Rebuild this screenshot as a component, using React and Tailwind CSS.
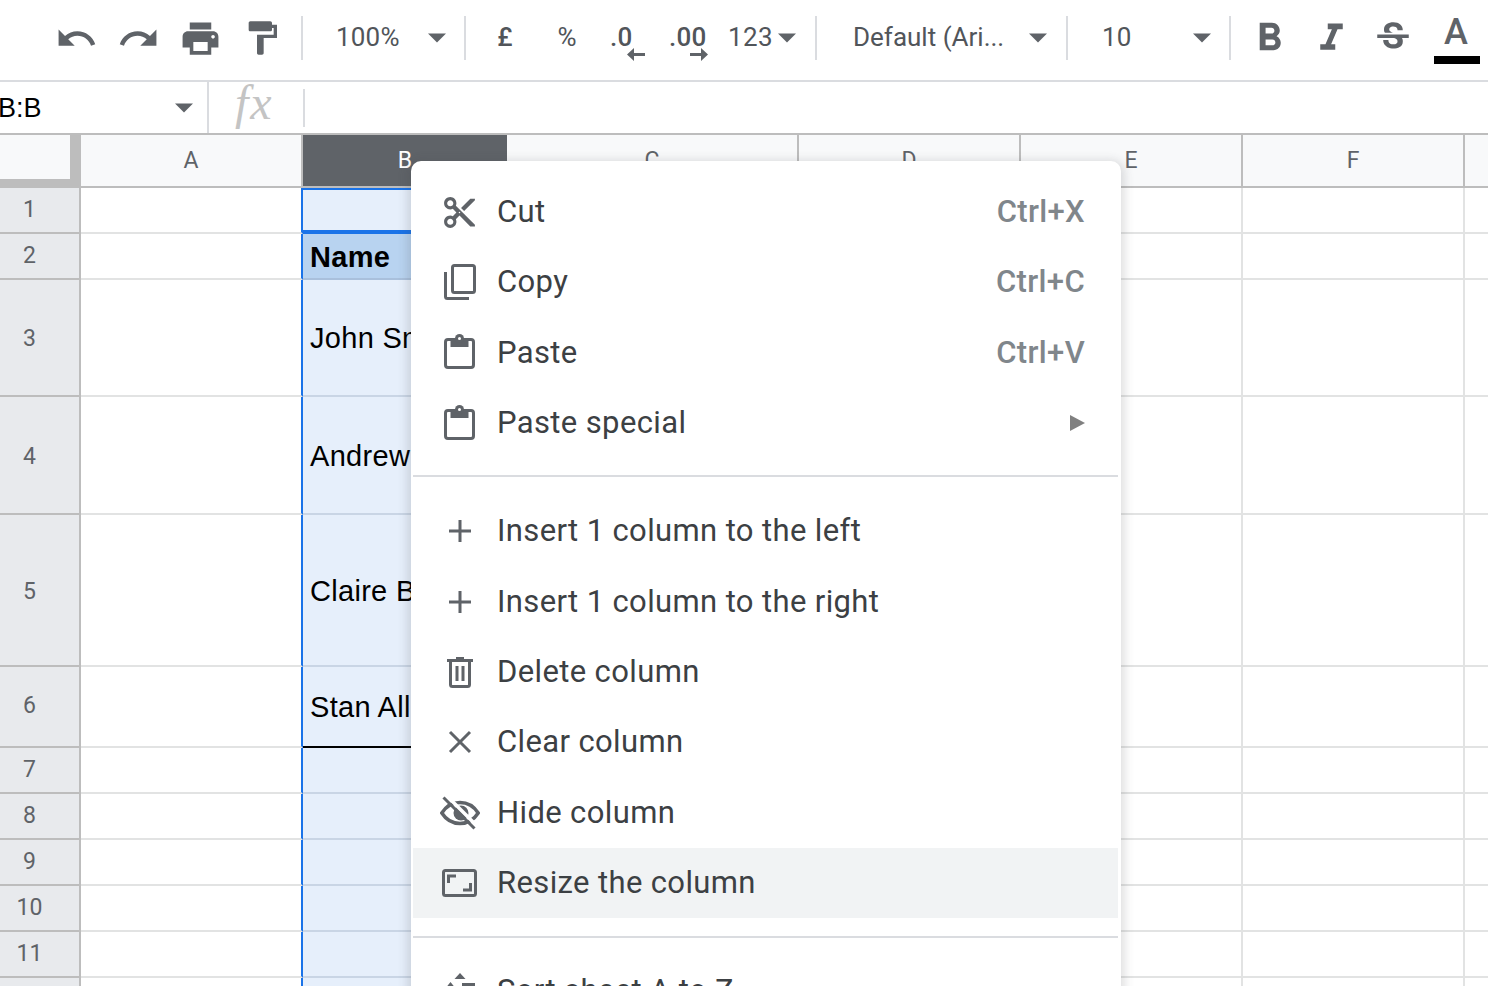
import React from 'react';

const Caret = ({ className = '' }) => (
  <svg width="18" height="10" viewBox="0 0 18 10" className={`shrink-0 ${className}`}>
    <path d="M0 0.5h18L9 9.5z" fill="#5f6368" />
  </svg>
);

const MaterialIcon = ({ d, size = 43 }) => (
  <svg width={size} height={size} viewBox="0 0 24 24" fill="#5f6368">
    <path d={d} />
  </svg>
);

const ToolbarCell = ({ children, className = '' }) => (
  <div className={`flex h-full w-[62px] shrink-0 items-center justify-center ${className}`}>{children}</div>
);

const Divider = () => <div className="h-[44px] w-[2px] shrink-0 bg-[#dadce0]" />;

const Arrow = ({ flip }) => (
  <svg width="18" height="13" viewBox="0 0 18 13" className={`absolute top-[48px] ${flip ? 'left-[30px]' : 'left-[29px]'}`}>
    <path d={flip ? 'M0 5h11V0l7 6.5L11 13V8H0z' : 'M18 5H7V0L0 6.5 7 13V8h11z'} fill="#5f6368" />
  </svg>
);

const Toolbar = () => (
  <div className="flex h-[80px] items-start pl-[45px] pt-[16px] font-['Roboto',sans-serif] text-[26px] tracking-[0.2px] text-[#51555a]">
    <div className="-mt-[16px] flex h-[76px]">
      <ToolbarCell><MaterialIcon d="M12.5 8c-2.65 0-5.05.99-6.9 2.6L2 7v9h9l-3.62-3.62c1.39-1.16 3.16-1.88 5.12-1.88 3.54 0 6.55 2.31 7.6 5.5l2.37-.78C21.08 11.03 17.15 8 12.5 8z" /></ToolbarCell>
      <ToolbarCell><MaterialIcon d="M18.4 10.6C16.55 8.99 14.15 8 11.5 8c-4.65 0-8.58 3.03-9.96 7.22L3.9 16c1.05-3.19 4.05-5.5 7.6-5.5 1.95 0 3.73.72 5.12 1.88L13 16h9V7l-3.6 3.6z" /></ToolbarCell>
      <ToolbarCell><MaterialIcon d="M19 8H5c-1.66 0-3 1.34-3 3v6h4v4h12v-4h4v-6c0-1.66-1.34-3-3-3zm-3 11H8v-5h8v5zm3-7c-.55 0-1-.45-1-1s.45-1 1-1 1 .45 1 1-.45 1-1 1zm-1-9H6v4h12V3z" /></ToolbarCell>
      <ToolbarCell><MaterialIcon size={40} d="M18 4V3c0-.55-.45-1-1-1H5c-.55 0-1 .45-1 1v4c0 .55.45 1 1 1h12c.55 0 1-.45 1-1V6h1v4H9v11c0 .55.45 1 1 1h2c.55 0 1-.45 1-1v-9h8V4h-3z" /></ToolbarCell>
    </div>
    <div className="ml-[8px]"><Divider /></div>

    <div className="flex h-[44px] w-[161px] shrink-0 items-center justify-between pl-[33px] pr-[18px]">
      <span className="-mt-[2px]">100%</span>
      <Caret />
    </div>
    <Divider />

    <div className="-mt-[16px] flex h-[76px] pl-[8px]">
      <ToolbarCell className="font-medium"><span className="-mt-[2px]">£</span></ToolbarCell>
      <ToolbarCell><span className="-mt-[2px]">%</span></ToolbarCell>
      <ToolbarCell className="relative justify-start pl-[12px]">
        <span className="-mt-[2px] font-medium">.0</span>
        <Arrow />
      </ToolbarCell>
      <ToolbarCell className="relative justify-start pl-[9px]">
        <span className="-mt-[2px] font-medium">.00</span>
        <Arrow flip />
      </ToolbarCell>
    </div>
    <div className="flex h-[44px] w-[93px] shrink-0 items-center gap-[5px] pl-[6px] tracking-[0.4px]">
      <span className="-mt-[2px]">123</span>
      <Caret />
    </div>
    <Divider />

    <div className="flex h-[44px] w-[249px] shrink-0 items-center justify-between pl-[36px] pr-[19px]">
      <span className="-mt-[2px] tracking-normal">Default (Ari...</span>
      <Caret />
    </div>
    <Divider />

    <div className="flex h-[44px] w-[161px] shrink-0 items-center justify-between pl-[34px] pr-[18px]">
      <span className="-mt-[2px]">10</span>
      <Caret />
    </div>
    <Divider />

    <div className="-mt-[16px] flex h-[76px] pl-[7px]">
      <ToolbarCell><MaterialIcon size={47} d="M15.6 10.79c.97-.67 1.65-1.77 1.65-2.79 0-2.26-1.75-4-4-4H7v14h7.04c2.09 0 3.71-1.7 3.71-3.79 0-1.52-.86-2.82-2.15-3.42zM10 6.5h3c.83 0 1.5.67 1.5 1.5s-.67 1.5-1.5 1.5h-3v-3zm3.5 9H10v-3h3.5c.83 0 1.5.67 1.5 1.5s-.67 1.5-1.5 1.5z" /></ToolbarCell>
      <ToolbarCell><MaterialIcon size={45} d="M10 4v3h2.21l-3.42 8H6v3h8v-3h-2.21l3.42-8H18V4z" /></ToolbarCell>
      <ToolbarCell><MaterialIcon size={42} d="M6.85 7.08C6.85 4.37 9.45 3 12.24 3c1.64 0 3 .49 3.9 1.28.77.65 1.46 1.73 1.46 3.24h-3.01c0-.31-.05-.59-.15-.85-.29-.86-1.2-1.28-2.25-1.28-1.86 0-2.34 1.02-2.34 1.7 0 .48.25.88.74 1.21.38.25.77.48 1.41.7H7.39c-.21-.34-.54-.89-.54-1.92zM21 12v-2H3v2h9.62c1.15.45 1.96.75 1.96 1.97 0 1-.81 1.67-2.28 1.67-1.54 0-2.93-.54-2.93-2.51H6.4c0 .55.08 1.13.24 1.58.81 2.29 3.29 3.3 5.67 3.3 2.27 0 5.3-.89 5.3-4.05 0-.3-.01-1.16-.48-1.94H21V12z" /></ToolbarCell>
      <div className="flex w-[62px] shrink-0 flex-col items-center pl-[4px] text-[#5f6368]">
        <span className="-ml-[2px] mt-[12px] text-[36px] font-medium leading-[40px]">A</span>
        <div className="mt-[4px] h-[8px] w-[46px] bg-black" />
      </div>
    </div>
  </div>
);

const FormulaBar = () => (
  <div className="flex h-[55px] items-center border-y-2 border-t-[#dadce0] border-b-[#bdbdbd] font-['Liberation_Sans',sans-serif]">
    <div className="flex w-[207px] shrink-0 items-center justify-between pr-[14px]">
      <span className="-ml-[2px] pt-[1px] text-[27px] text-black">B:B</span>
      <Caret />
    </div>
    <div className="h-[51px] w-[2px] bg-[#dadce0]" />
    <div className="w-[94px] pb-[10px] pl-[26px] font-['Liberation_Serif',serif] text-[48px] italic leading-none tracking-[2px] text-[#c4c4c4]">fx</div>
    <div className="h-[38px] w-[2px] bg-[#dadce0]" />
  </div>
);

const columns = ['A', 'B', 'C', 'D', 'E', 'F', ''];
const rows = [
  { n: 1, h: 'h-[46px]' },
  { n: 2, h: 'h-[46px]', name: 'Name' },
  { n: 3, h: 'h-[117px]', name: 'John Smith', tall: true },
  { n: 4, h: 'h-[118px]', name: 'Andrew', tall: true },
  { n: 5, h: 'h-[152px]', name: 'Claire B', tall: true },
  { n: 6, h: 'h-[81px]', name: 'Stan All' },
  { n: 7, h: 'h-[46px]' },
  { n: 8, h: 'h-[46px]' },
  { n: 9, h: 'h-[46px]' },
  { n: 10, h: 'h-[46px]' },
  { n: 11, h: 'h-[46px]' },
  { n: '', h: 'h-[46px]' },
];

const gridCols = 'grid grid-cols-[81px_222px_204px_292px_222px_222px_222px_1fr]';

const cellB = (n) => {
  if (n === 1) return 'border-t-2 border-r-2 border-b-[4px] border-[#1a73e8] bg-[#e6effb]';
  if (n === 2) return 'border-b-2 border-b-[#a9c0dc] bg-[#b8d3f0] font-bold';
  if (n === 6) return 'border-b-2 border-b-black bg-[#e6effb]';
  return 'border-b-2 border-b-[#c9d5e5] bg-[#e6effb]';
};

const Sheet = () => (
  <div className="font-['Roboto',sans-serif] text-[23px] text-[#5f6368]">
    <div className={`${gridCols} h-[53px]`}>
      <div className="border-b-[9px] border-r-[11px] border-[#bdbdbd] bg-[#f8f9fa]" />
      {columns.map((c) => (
        <div
          key={c || 'rest'}
          className={
            c === 'B'
              ? 'flex items-center justify-center border-b-2 border-[#bdbdbd] bg-[#5f6368] pt-[1px] text-white'
              : `flex items-center justify-center border-b-2 border-[#bdbdbd] bg-[#f8f9fa] pt-[1px] ${c ? 'border-r-2' : ''}`
          }
        >
          {c}
        </div>
      ))}
    </div>
    {rows.map((r) => (
      <div key={r.n || 'last'} className={`${gridCols} ${r.h}`}>
        <div className={`flex items-center justify-center border-b-2 border-r-2 border-[#bdbdbd] bg-[#e8eaed] pr-[20px] ${r.tall ? 'pt-[4px]' : ''}`}>{r.n}</div>
        {columns.map((c) =>
          c === 'B' ? (
            <div
              key={c}
              className={`flex items-center overflow-hidden whitespace-nowrap pl-[7px] pt-[3px] font-['Liberation_Sans',sans-serif] text-[29px] tracking-[0.3px] text-black ${cellB(r.n)}`}
            >
              {r.name}
            </div>
          ) : (
            <div
              key={c || 'rest'}
              className={`border-b-2 border-[#e2e3e3] bg-white ${c ? 'border-r-2' : ''} ${c === 'A' ? 'border-r-[#1a73e8]' : ''}`}
            />
          ),
        )}
      </div>
    ))}
  </div>
);

const ic = { fill: 'none', stroke: '#5f6368', strokeWidth: 3 };

const CutIcon = () => <MaterialIcon size={37} d="M9.64 7.64c.23-.5.36-1.05.36-1.64 0-2.21-1.79-4-4-4S2 3.79 2 6s1.79 4 4 4c.59 0 1.14-.13 1.64-.36L10 12l-2.36 2.36C7.14 14.13 6.59 14 6 14c-2.21 0-4 1.79-4 4s1.79 4 4 4 4-1.79 4-4c0-.59-.13-1.14-.36-1.64L12 14l7 7h3v-1L9.64 7.64zM6 8c-1.1 0-2-.89-2-2s.9-2 2-2 2 .89 2 2-.9 2-2 2zm0 12c-1.1 0-2-.89-2-2s.9-2 2-2 2 .89 2 2-.9 2-2 2zm6-7.5c-.28 0-.5-.22-.5-.5s.22-.5.5-.5.5.22.5.5-.22.5-.5.5zM19 3l-6 6 2 2 7-7V3h-3z" />;

const CopyIcon = () => (
  <svg width="32" height="36" viewBox="0 0 32 36">
    <rect x="8.5" y="1.5" width="22" height="27" rx="2" {...ic} />
    <path d="M1.5 8v24.5a2 2 0 0 0 2 2H25" {...ic} />
  </svg>
);

const PasteIcon = () => (
  <svg width="31" height="35" viewBox="0 0 31 35" className="-mt-[2px]">
    <rect x="1.5" y="5.5" width="28" height="28" rx="2.5" {...ic} />
    <path d="M6.5 4.5h18V13h-18z" fill="#5f6368" />
    <circle cx="15.5" cy="4.5" r="4.5" fill="#5f6368" />
    <circle cx="15.5" cy="4.5" r="1.5" fill="#fff" />
  </svg>
);

const PlusIcon = () => (
  <svg width="24" height="24" viewBox="0 0 24 24">
    <path d="M12 1v22M1 12h22" {...ic} />
  </svg>
);

const TrashIcon = () => (
  <svg width="26" height="32" viewBox="0 0 26 32">
    <path d="M0 4.5h26" {...ic} />
    <path d="M9 3V1h8v2z" fill="#5f6368" />
    <path d="M3.5 5v23.5a2 2 0 0 0 2 2h15a2 2 0 0 0 2-2V5" {...ic} />
    <path d="M8.5 10h3v15h-3zM14.5 10h3v15h-3z" fill="#5f6368" />
  </svg>
);

const ClearIcon = () => (
  <svg width="24" height="24" viewBox="0 0 24 24">
    <path d="M2 2l20 20M22 2L2 22" {...ic} />
  </svg>
);

const HideIcon = () => (
  <svg width="40" height="34" viewBox="0 0 40 34">
    <path d="M1.8 17C6 10.5 12.5 6.5 20 6.5S34 10.500 38.2 17C34 23.500 27.5 27.5 20 27.5S6 23.5 1.8 17z" fill="none" stroke="#5f6368" strokeWidth="3.5" />
    <circle cx="21" cy="17" r="7.5" fill="#5f6368" />
    <path d="M7 0L38 31" fill="none" stroke="#fff" strokeWidth="3.5" />
    <path d="M3.5 1.5L34.5 32.5" {...ic} />
  </svg>
);

const ResizeIcon = () => (
  <svg width="35" height="28" viewBox="0 0 35 28">
    <rect x="1.5" y="1.5" width="32" height="25" rx="2" {...ic} />
    <path d="M6.5 14V7H14M28.5 14v7H21" {...ic} />
  </svg>
);

const SortIcon = () => (
  <svg width="32" height="36" viewBox="0 0 32 36">
    <path d="M16 0l5.5 6h-11z" fill="#5f6368" />
    <path d="M6.5 9l4 5h-8zM18 10h13v3H18z" fill="#5f6368" />
  </svg>
);

const menuTop = [
  { label: 'Cut', icon: <CutIcon />, keys: 'Ctrl+X' },
  { label: 'Copy', icon: <CopyIcon />, keys: 'Ctrl+C' },
  { label: 'Paste', icon: <PasteIcon />, keys: 'Ctrl+V' },
  { label: 'Paste special', icon: <PasteIcon />, submenu: true },
];

const menuMiddle = [
  { label: 'Insert 1 column to the left', icon: <PlusIcon /> },
  { label: 'Insert 1 column to the right', icon: <PlusIcon /> },
  { label: 'Delete column', icon: <TrashIcon /> },
  { label: 'Clear column', icon: <ClearIcon /> },
  { label: 'Hide column', icon: <HideIcon /> },
  { label: 'Resize the column', icon: <ResizeIcon />, active: true },
];

const MenuItem = ({ item }) => (
  <div className={`flex h-[70.33px] items-center pr-[33px] ${item.active ? 'bg-[#f1f3f4]' : ''}`}>
    <div className="flex w-[84px] shrink-0 justify-center pl-[9px]">{item.icon}</div>
    <span className="flex-1">{item.label}</span>
    {item.keys && <span className="font-medium tracking-[0.35px] text-[#80868b]">{item.keys}</span>}
    {item.submenu && (
      <svg width="16" height="16" viewBox="0 0 16 16">
        <path d="M1 0l15 8-15 8z" fill="#808080" />
      </svg>
    )}
  </div>
);

const ContextMenu = () => (
  <div className="absolute left-[411px] top-[161px] w-[710px] rounded-[10px] bg-white pb-[20px] pl-[2px] pr-[3px] pt-[16px] font-['Roboto',sans-serif] text-[31px] tracking-[0.37px] text-[#3c4043] shadow-[0_3px_10px_4px_rgba(60,64,67,0.16)]">
    {menuTop.map((item) => (
      <MenuItem key={item.label} item={item} />
    ))}
    <div className="mb-[19px] mt-[17px] h-[2px] bg-[#dadce0]" />
    {menuMiddle.map((item) => (
      <MenuItem key={item.label} item={item} />
    ))}
    <div className="my-[18px] h-[2px] bg-[#dadce0]" />
    <MenuItem item={{ label: 'Sort sheet A to Z', icon: <SortIcon /> }} />
  </div>
);

export default function App() {
  return (
    <div className="relative h-[986px] overflow-hidden bg-white">
      <Toolbar />
      <FormulaBar />
      <Sheet />
      <ContextMenu />
    </div>
  );
}
